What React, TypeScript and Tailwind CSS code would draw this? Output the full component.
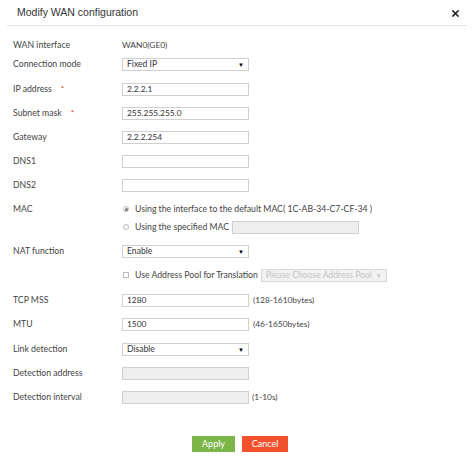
import React from 'react';

const font = { fontFamily: 'Lato, "Open Sans", sans-serif' };

function Label({ text, required = false }: { text: string; required?: boolean }) {
  return (
    <div className="w-[109px] shrink-0 flex items-center text-[8.7px] text-[#444]">
      <span>{text}</span>
      {required && <span className="ml-[9px] text-[#e8392f] text-[8px]">*</span>}
    </div>
  );
}

function TextBox({ value = '', disabled = false }: { value?: string; disabled?: boolean }) {
  return (
    <div
      className={`w-[127px] h-[13px] border border-[#d0d0d0] flex items-center px-[4px] text-[8.4px] text-[#333] ${
        disabled ? 'bg-[#eeeeee]' : 'bg-white'
      }`}
    >
      {value}
    </div>
  );
}

function SelectBox({ value }: { value: string }) {
  return (
    <div className="w-[127px] h-[13px] border border-[#d0d0d0] bg-white flex items-center justify-between px-[4px] text-[8.6px] text-[#333]">
      <span>{value}</span>
      <span className="text-[6px] text-black">▼</span>
    </div>
  );
}

export default function App() {
  return (
    <div className="w-[474px] h-[464px] bg-white overflow-hidden" style={font}>
      {/* Header */}
      <div className="mx-[7px] h-[26px] border-b border-[#e3e3e3] flex items-center justify-between pl-[10px] pr-[8px]">
        <span className="text-[10.5px] text-[#333] pt-[1px]" style={{ fontFamily: '"Liberation Sans", Arial, sans-serif' }}>
          Modify WAN configuration
        </span>
        <svg width="7" height="7" viewBox="0 0 7 7" className="mt-[1px]">
          <path d="M1 1L6 6M6 1L1 6" stroke="#222" strokeWidth="1.6" strokeLinecap="square" />
        </svg>
      </div>

      <div className="pl-[13px]">
        {/* WAN interface */}
        <div className="mt-[12px] h-[14px] flex items-center">
          <Label text="WAN interface" />
          <span className="text-[8.4px] text-[#444]">WAN0(GE0)</span>
        </div>
        <div className="h-[24px] flex items-center">
          <Label text="Connection mode" />
          <SelectBox value="Fixed IP" />
        </div>
        <div className="mt-[1px] h-[24px] flex items-center">
          <Label text="IP address" required />
          <TextBox value="2.2.2.1" />
        </div>
        <div className="h-[24px] flex items-center">
          <Label text="Subnet mask" required />
          <TextBox value="255.255.255.0" />
        </div>
        <div className="h-[24px] flex items-center">
          <Label text="Gateway" />
          <TextBox value="2.2.2.254" />
        </div>
        <div className="h-[24px] flex items-center">
          <Label text="DNS1" />
          <TextBox />
        </div>
        <div className="h-[24px] flex items-center">
          <Label text="DNS2" />
          <TextBox />
        </div>

        {/* MAC */}
        <div className="mt-[3px] flex">
          <div className="h-[18px] flex items-center">
            <Label text="MAC" />
          </div>
          <div className="flex flex-col text-[8.7px] text-[#444] whitespace-nowrap">
            <div className="h-[18px] flex items-center">
              <span className="w-[6px] h-[6px] rounded-full border border-[#bbb] flex items-center justify-center ml-[1px] mr-[6px]">
                <span className="w-[3px] h-[3px] rounded-full bg-[#777]" />
              </span>
              Using the interface to the default MAC( 1C-AB-34-C7-CF-34 )
            </div>
            <div className="h-[18px] flex items-center">
              <span className="w-[6px] h-[6px] rounded-full border border-[#bbb] ml-[1px] mr-[6px]" />
              Using the specified MAC
              <div className="ml-[3px] w-[127px] h-[13px] border border-[#d0d0d0] bg-[#eeeeee]" />
            </div>
          </div>
        </div>

        <div className="mt-[3px] h-[24px] flex items-center">
          <Label text="NAT function" />
          <SelectBox value="Enable" />
        </div>
        <div className="h-[24px] flex items-center whitespace-nowrap">
          <div className="w-[109px] shrink-0" />
          <span className="w-[6px] h-[6px] border border-[#bbb] ml-[1px] mr-[6px]" />
          <span className="text-[8.7px] text-[#444]">Use Address Pool for Translation</span>
          <div className="ml-[3px] w-[126px] h-[13px] border border-[#d8d8d8] bg-[#f2f2f2] flex items-center justify-between px-[4px] text-[8.6px] text-[#c4c4c4]">
            <span>Please Choose Address Pool</span>
            <span className="text-[6px]">▼</span>
          </div>
        </div>
        <div className="mt-[1px] h-[24px] flex items-center">
          <Label text="TCP MSS" />
          <TextBox value="1280" />
          <span className="ml-[4px] text-[8.4px] text-[#444]">(128-1610bytes)</span>
        </div>
        <div className="h-[24px] flex items-center">
          <Label text="MTU" />
          <TextBox value="1500" />
          <span className="ml-[4px] text-[8.4px] text-[#444]">(46-1650bytes)</span>
        </div>
        <div className="mt-[1px] h-[24px] flex items-center">
          <Label text="Link detection" />
          <SelectBox value="Disable" />
        </div>
        <div className="h-[24px] flex items-center">
          <Label text="Detection address" />
          <TextBox disabled />
        </div>
        <div className="h-[24px] flex items-center">
          <Label text="Detection interval" />
          <TextBox disabled />
          <span className="ml-[3px] text-[8.4px] text-[#444]">(1-10s)</span>
        </div>
      </div>

      {/* Buttons */}
      <div className="mt-[27px] flex justify-center gap-[7px] pl-[6px]">
        <button className="w-[43px] h-[16px] bg-[#7cb548] text-white text-[9px] flex items-center justify-center">
          Apply
        </button>
        <button className="w-[46px] h-[16px] bg-[#f1512b] text-white text-[9px] flex items-center justify-center">
          Cancel
        </button>
      </div>
    </div>
  );
}
